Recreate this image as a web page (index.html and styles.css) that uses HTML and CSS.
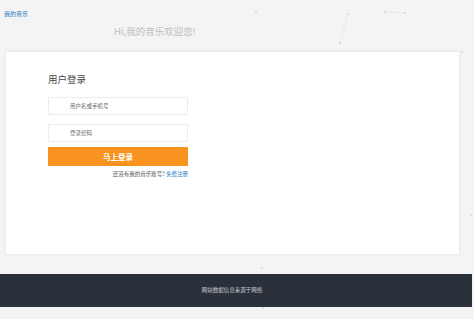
FILE: index.html
```html
<!DOCTYPE html>
<html lang="en">
<head>
    <meta charset="UTF-8">
    <meta name="viewport" content="width=device-width, initial-scale=1.0">
    <title>我的音乐 - 用户登录</title>
    <link rel="stylesheet" href="styles.css">
</head>
<body>
    <svg class="particles" width="474" height="319" viewBox="0 0 474 319">
        <line x1="385" y1="12" x2="405" y2="13"></line>
        <line x1="348" y1="14" x2="340" y2="43"></line>
        <circle cx="256" cy="12" r="0.8"></circle>
        <circle cx="348" cy="14" r="0.8"></circle>
        <circle cx="385" cy="12" r="0.8"></circle>
        <circle cx="405" cy="13" r="0.8"></circle>
        <circle cx="340" cy="43" r="0.8"></circle>
        <circle cx="462" cy="52" r="0.8"></circle>
        <circle cx="471" cy="215" r="0.8"></circle>
        <circle cx="262" cy="268" r="0.8"></circle>
        <circle cx="263" cy="308" r="0.8"></circle>
    </svg>

    <div class="header">
        <a class="logo" href="#">我的音乐</a>
        <div class="welcome">Hi,我的音乐欢迎您!</div>
    </div>

    <div class="card">
        <div class="login">
            <h2>用户登录</h2>
            <input id="loginName" type="text" placeholder="用户名或手机号">
            <input id="loginPassword" type="password" placeholder="登录密码">
            <button id="loginbtn">马上登录</button>
            <div class="signup-link">还没有我的音乐账号? <a href="#">免费注册</a></div>
        </div>
    </div>

    <div class="footer">网站数据信息来源于网络</div>
</body>
</html>
```
FILE: styles.css
```css
body {
    font-family: "Noto Sans CJK SC", "Liberation Sans", sans-serif;
    background-color: #f4f4f4;
    color: #333;
    margin: 0;
    height: 319px;
    overflow: hidden;
    position: relative;
}

.particles {
    position: absolute;
    left: 0;
    top: 0;
    pointer-events: none;
}

.particles line {
    stroke: #dcdcdc;
    stroke-width: 0.5;
}

.particles circle {
    fill: #c4c4c4;
}

.header {
    height: 51px;
    box-sizing: border-box;
    padding: 10px 0 0 4px;
}

.logo {
    display: block;
    font-size: 6px;
    line-height: 8px;
    color: #2a7cc1;
    text-decoration: none;
}

.welcome {
    margin: 6px 0 0 110px;
    font-size: 9.5px;
    line-height: 14px;
    color: #bdbdbd;
}

.card {
    margin: 0 14px 0 5px;
    height: 204px;
    box-sizing: border-box;
    background: #fff;
    border: 1px solid #ececec;
    box-shadow: 0 0 2px rgba(0, 0, 0, 0.06);
    padding: 20px 0 0 42px;
}

.login {
    width: 140px;
    display: flex;
    flex-direction: column;
}

.login h2 {
    margin: 0 0 11px 0;
    font-size: 9.5px;
    line-height: 14px;
    font-weight: normal;
    color: #444;
}

.login input {
    height: 18px;
    margin: 0 0 9px 0;
    padding: 0 0 0 21px;
    border: 1px solid #ececec;
    border-radius: 1px;
    background-color: #fff;
    font-family: inherit;
    font-size: 5.5px;
    color: #555;
    box-sizing: border-box;
    outline: none;
}

.login input#loginPassword {
    margin-bottom: 5px;
}

.login input::placeholder {
    color: #666;
}

.login button {
    height: 19px;
    padding: 0;
    border: none;
    border-radius: 1px;
    background-color: #f7931e;
    color: #fff;
    font-family: inherit;
    font-size: 7.5px;
    font-weight: bold;
    cursor: pointer;
}

.login button:hover {
    background-color: #f08410;
}

.signup-link {
    margin-top: 3px;
    text-align: right;
    font-size: 5.5px;
    line-height: 10px;
    color: #555;
}

.signup-link a {
    color: #2a7cc1;
    text-decoration: none;
}

.footer {
    margin-top: 19px;
    height: 33px;
    width: 472px;
    background-color: #2b313b;
    color: #c9ccd1;
    font-size: 5.5px;
    line-height: 33px;
    text-align: center;
    box-sizing: border-box;
    padding-right: 8px;
}
```
